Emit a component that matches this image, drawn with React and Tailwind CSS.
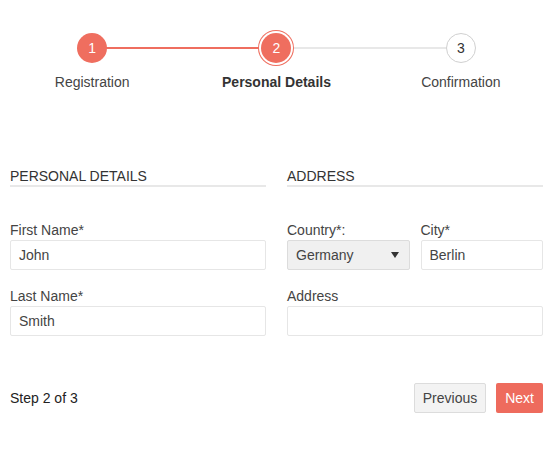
import React from "react";

const steps = [
  { n: 1, label: "Registration", state: "done" },
  { n: 2, label: "Personal Details", state: "current" },
  { n: 3, label: "Confirmation", state: "todo" },
];

function StepCircle({ n, state }) {
  if (state === "done") {
    return (
      <div className="w-[30px] h-[30px] rounded-full bg-[#ef6e5f] text-white flex items-center justify-center text-[14px]">
        {n}
      </div>
    );
  }
  if (state === "current") {
    return (
      <div className="w-[30px] h-[30px] rounded-full bg-[#ef6e5f] text-white flex items-center justify-center text-[14px] shadow-[0_0_0_2px_#ffffff,0_0_0_3px_#ef6e5f]">
        {n}
      </div>
    );
  }
  return (
    <div className="w-[30px] h-[30px] rounded-full bg-white border border-[#d0d0d0] text-[#333] flex items-center justify-center text-[14px]">
      {n}
    </div>
  );
}

function Field({ label, value, className = "" }) {
  return (
    <div className={className}>
      <div className="text-[14px] leading-[16px] text-[#444] mb-[2px]">{label}</div>
      <div className="h-[30px] border border-[#e6e6e6] rounded-[2px] px-[8px] flex items-center text-[14px] text-[#444]">
        {value}
      </div>
    </div>
  );
}

function SectionHeader({ children }) {
  return (
    <div className="text-[14px] leading-[16px] text-[#333] pb-[1px] border-b-2 border-[#e8e8e8]">
      {children}
    </div>
  );
}

export default function App() {
  return (
    <div className="w-[553px] h-[473px] bg-white font-['Liberation_Sans',Arial,sans-serif]">
      {/* Stepper */}
      <div className="relative pt-[33px]">
        <div className="absolute top-[47px] left-[92px] w-[184px] h-[2px] bg-[#ef6e5f]" />
        <div className="absolute top-[47px] left-[276px] w-[185px] h-[2px] bg-[#e8e8e8]" />
        <div className="relative grid grid-cols-3">
          {steps.map((s) => (
            <div key={s.n} className="flex flex-col items-center">
              <StepCircle n={s.n} state={s.state} />
              <div
                className={`mt-[11px] text-[14px] leading-[16px] ${
                  s.state === "current" ? "font-bold text-[#333]" : "text-[#444]"
                }`}
              >
                {s.label}
              </div>
            </div>
          ))}
        </div>
      </div>

      {/* Form */}
      <div className="grid grid-cols-2 gap-x-[21px] px-[10px] mt-[78px]">
        <div>
          <SectionHeader>PERSONAL DETAILS</SectionHeader>
          <Field label="First Name*" value="John" className="mt-[35px]" />
          <Field label="Last Name*" value="Smith" className="mt-[18px]" />
        </div>
        <div>
          <SectionHeader>ADDRESS</SectionHeader>
          <div className="mt-[35px] grid grid-cols-2 gap-x-[11px]">
            <div>
              <div className="text-[14px] leading-[16px] text-[#444] mb-[2px]">Country*:</div>
              <div className="h-[30px] border border-[#dcdcdc] rounded-[2px] bg-[#f0f0f0] pl-[8px] pr-[10px] flex items-center justify-between text-[14px] text-[#444]">
                <span>Germany</span>
                <span className="w-0 h-0 border-l-[4px] border-r-[4px] border-t-[6px] border-l-transparent border-r-transparent border-t-[#333]" />
              </div>
            </div>
            <Field label="City*" value="Berlin" />
          </div>
          <Field label="Address" value="" className="mt-[18px]" />
        </div>
      </div>

      {/* Footer */}
      <div className="flex items-center justify-between px-[10px] mt-[47px]">
        <div className="text-[14px] text-[#222]">Step 2 of 3</div>
        <div className="flex gap-[10px]">
          <button className="h-[30px] px-[8px] border border-[#dcdcdc] rounded-[2px] bg-[#f3f3f3] text-[14px] text-[#444]">
            Previous
          </button>
          <button className="h-[30px] px-[9px] rounded-[2px] bg-[#ee6b5d] text-[14px] text-white">
            Next
          </button>
        </div>
      </div>
    </div>
  );
}
